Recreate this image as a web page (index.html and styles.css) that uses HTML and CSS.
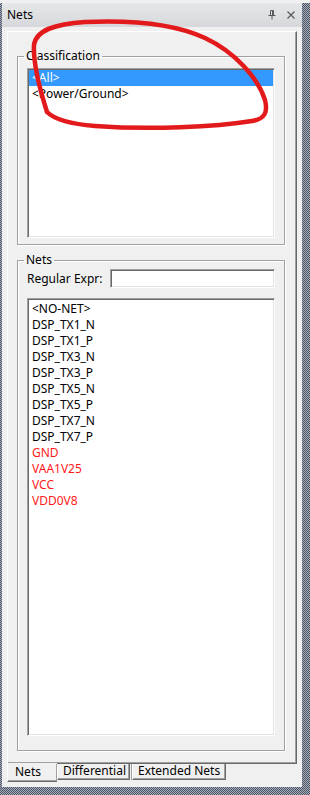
FILE: index.html
```html
<!DOCTYPE html>
<html lang="en">
<head>
  <meta charset="UTF-8" />
  <title>Nets</title>
  <link rel="stylesheet" href="styles.css">
</head>
<body>

<div class="dock">
  <div class="pane">
    <div class="titlebar">
      <span class="title">Nets</span>
      <span class="tools">
        <svg class="pin" width="8" height="10" viewBox="0 0 8 10">
          <path d="M2.5 0.5h3v5h-3z M0.5 5.5h7 M4 5.5v4 M4.5 1v4" fill="none" stroke="#5a5a5a" stroke-width="1"/>
        </svg>
        <svg class="close" width="8" height="8" viewBox="0 0 8 8">
          <path d="M0.5 0.5l7 7 M7.5 0.5l-7 7" fill="none" stroke="#5a5a5a" stroke-width="1.2"/>
        </svg>
      </span>
    </div>

    <div class="content">
      <div class="page">
        <fieldset class="group group-class">
          <legend>Classification</legend>
          <ul class="listbox class-list">
            <li class="selected">&lt;All&gt;</li>
            <li>&lt;Power/Ground&gt;</li>
          </ul>
        </fieldset>

        <fieldset class="group group-nets">
          <legend>Nets</legend>
          <div class="filter">
            <label for="regex">Regular Expr:</label>
            <input type="text" id="regex" class="textbox" />
          </div>
          <ul class="listbox net-list">
            <li>&lt;NO-NET&gt;</li>
            <li>DSP_TX1_N</li>
            <li>DSP_TX1_P</li>
            <li>DSP_TX3_N</li>
            <li>DSP_TX3_P</li>
            <li>DSP_TX5_N</li>
            <li>DSP_TX5_P</li>
            <li>DSP_TX7_N</li>
            <li>DSP_TX7_P</li>
            <li class="power">GND</li>
            <li class="power">VAA1V25</li>
            <li class="power">VCC</li>
            <li class="power">VDD0V8</li>
          </ul>
        </fieldset>
      </div>

      <div class="tabs">
        <div class="tab active">Nets</div>
        <div class="tab tab-diff">Differential</div>
        <div class="tab tab-ext">Extended Nets</div>
      </div>
    </div>
  </div>

  <!-- hand-drawn red mark over the classification list -->
  <svg class="scribble" width="310" height="795" viewBox="0 0 310 795">
    <path d="M47 112 C40 90, 33 62, 34 45 C36 30, 55 24, 85 22 C130 20, 175 24, 205 38 C235 52, 258 78, 265 100 C268 112, 265 119, 252 121 C215 127, 150 130, 95 126 C70 124, 55 120, 47 112"
          fill="none" stroke="#e31a1c" stroke-width="4.5" stroke-linecap="round" stroke-linejoin="round"/>
  </svg>
</div>

</body>
</html>
```

FILE: styles.css
```css
body {
  margin: 0;
  width: 310px;
  height: 795px;
  background: #f0f0f0;
  font-family: "Noto Sans", "Liberation Sans", sans-serif;
  font-size: 12px;
  color: #000;
  overflow: hidden;
}
.dock {
  position: relative;
  margin-top: 3px;
  height: 792px;
  box-sizing: border-box;
  padding: 0 8px 8px 2px;
  background: repeating-conic-gradient(#4b556c 0 25%, #a7abb4 0 50%) 0 0 / 2px 2px;
}
.pane {
  height: 100%;
  background: #f0f0f0;
  display: flex;
  flex-direction: column;
}
.titlebar {
  height: 24px;
  flex: none;
  display: flex;
  align-items: center;
  justify-content: space-between;
  padding: 0 7px 0 5px;
  background: linear-gradient(#e6e7e9, #d6d8db);
}
.title {
  line-height: 16px;
  margin-top: -1px;
}
.tools {
  display: flex;
  align-items: center;
  gap: 11px;
}
.tools svg {
  display: block;
}
.content {
  flex: 1;
  padding: 4px 5px 0 5px;
}
.page {
  height: 733px;
  box-sizing: border-box;
  padding: 16px 0 0 9px;
  border: 1px solid;
  border-color: #fff #696969 #696969 #fff;
  box-shadow: inset -1px -1px 0 #a0a0a0;
}
.group {
  width: 268px;
  box-sizing: border-box;
  margin: 0;
  padding: 4px 9px 6px 9px;
  border: 1px solid #a0a0a0;
  box-shadow: 1px 1px 0 #fff, inset 1px 1px 0 #fff;
  min-width: 0;
}
.group legend {
  padding: 0 2px;
  margin-left: -3px;
  line-height: 16px;
}
.group-nets {
  margin-top: 7px;
  padding: 1px 9px 14px 9px;
}
.listbox {
  list-style: none;
  margin: 0;
  background: #fff;
  border: 1px solid;
  border-color: #a0a0a0 #fff #fff #a0a0a0;
  box-shadow: inset 1px 1px 0 #696969, inset -1px -1px 0 #e3e3e3;
  box-sizing: border-box;
}
.class-list {
  height: 170px;
  padding: 1px 1px 0 1px;
}
.class-list li {
  line-height: 16px;
  padding-left: 3px;
}
.class-list li.selected {
  background: #3399ff;
  color: #fff;
}
.net-list {
  margin-top: 10px;
  height: 438px;
  padding: 2px 0 0 4px;
}
.net-list li {
  line-height: 16px;
  white-space: nowrap;
}
.net-list li.power {
  color: #ff1a1a;
}
.filter {
  display: flex;
  align-items: center;
  justify-content: space-between;
}
.filter label {
  line-height: 16px;
}
.textbox {
  width: 165px;
  height: 19px;
  box-sizing: border-box;
  margin: 0;
  padding: 0 2px;
  background: #fff;
  border: 1px solid;
  border-color: #a0a0a0 #fff #fff #a0a0a0;
  box-shadow: inset 1px 1px 0 #696969, inset -1px -1px 0 #e3e3e3;
  font: inherit;
  outline: none;
}
.tabs {
  display: flex;
  align-items: flex-start;
}
.tab {
  box-sizing: border-box;
  white-space: nowrap;
  background: #f0f0f0;
}
.tab.active {
  width: 50px;
  margin-top: -1px;
  padding: 1px 0 1px 7px;
  line-height: 16px;
  border-left: 1px solid #fff;
  border-bottom: 1px solid #696969;
  box-shadow: inset 0 -1px 0 #a0a0a0;
}
.tab-diff,
.tab-ext {
  padding: 0 0 1px 5px;
  line-height: 14px;
  border-left: 1px solid #fff;
  border-right: 1px solid #696969;
  border-bottom: 1px solid #696969;
  box-shadow: inset -1px -1px 0 #a0a0a0, -1px 0 0 #a0a0a0;
}
.tab-diff {
  width: 73px;
}
.tab-ext {
  width: 94px;
  margin-left: 2px;
}
.scribble {
  position: absolute;
  left: 0;
  top: -3px;
  pointer-events: none;
}
```
